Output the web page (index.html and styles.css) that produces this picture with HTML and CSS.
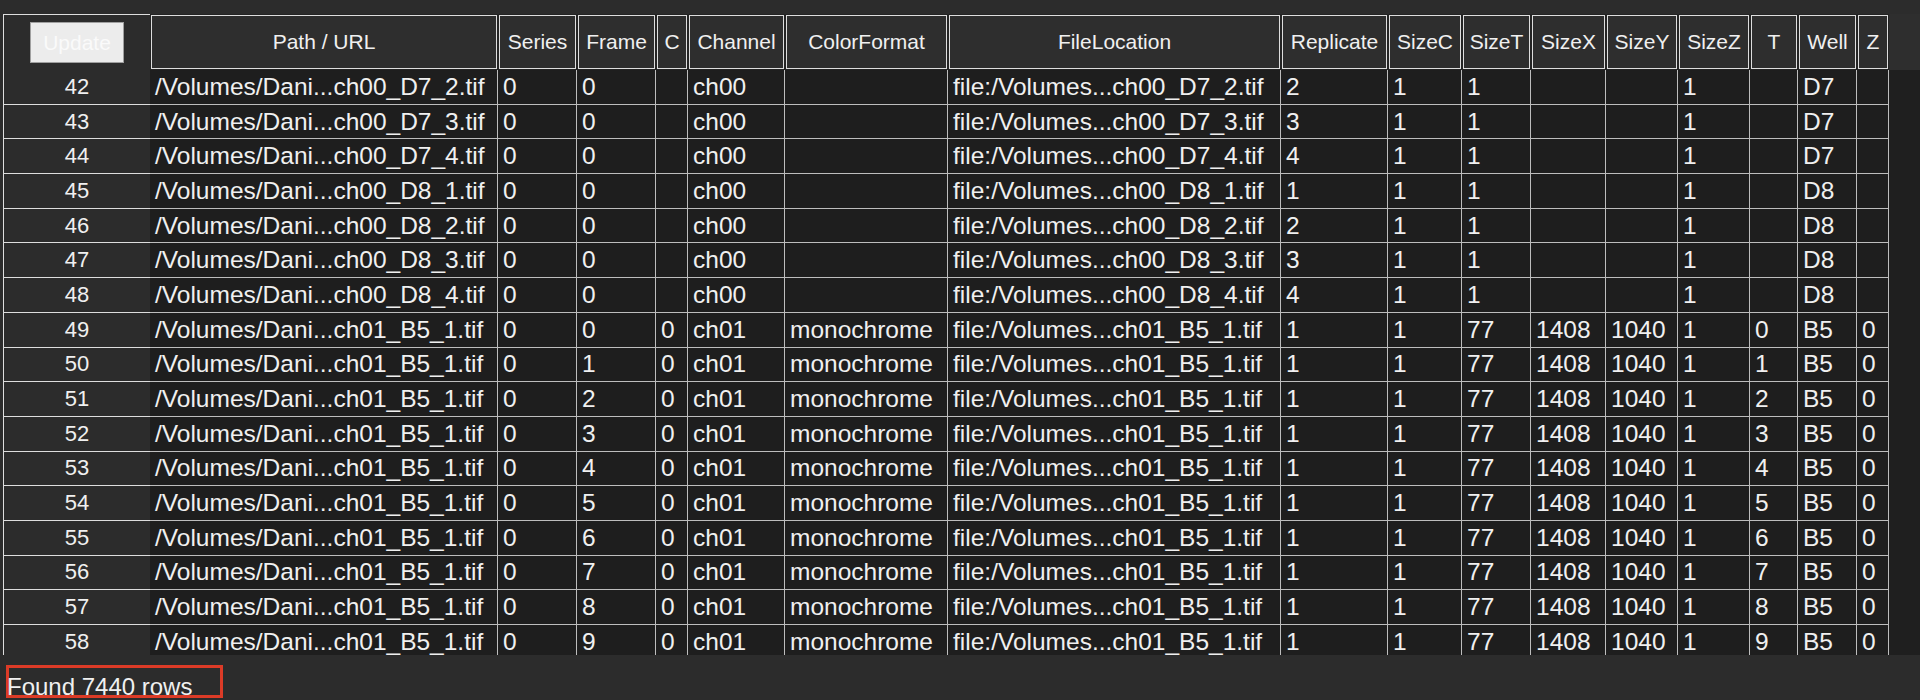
FILE: index.html
```html
<!DOCTYPE html>
<html lang="en">
<head>
    <meta charset="UTF-8">
    <meta name="viewport" content="width=device-width, initial-scale=1.0">
    <title>Image Table</title>

    <link rel="stylesheet" href="styles.css">
</head>
<body>

    <!-- Table view -->
    <div class="table-view">
        <table class="data-table">
            <colgroup>
                <col class="col-index">
                <col class="col-path">
                <col class="col-series">
                <col class="col-frame">
                <col class="col-c">
                <col class="col-channel">
                <col class="col-color">
                <col class="col-location">
                <col class="col-replicate">
                <col class="col-sizec">
                <col class="col-sizet">
                <col class="col-sizex">
                <col class="col-sizey">
                <col class="col-sizez">
                <col class="col-t">
                <col class="col-well">
                <col class="col-z">
                <col>
            </colgroup>
            <thead>
                <tr>
                    <th class="corner"><button class="update-button">Update</button></th>
                    <th>Path / URL</th>
                    <th>Series</th>
                    <th>Frame</th>
                    <th>C</th>
                    <th>Channel</th>
                    <th>ColorFormat</th>
                    <th>FileLocation</th>
                    <th>Replicate</th>
                    <th>SizeC</th>
                    <th>SizeT</th>
                    <th>SizeX</th>
                    <th>SizeY</th>
                    <th>SizeZ</th>
                    <th>T</th>
                    <th>Well</th>
                    <th>Z</th>
                    <th class="filler"></th>
                </tr>
            </thead>
            <tbody>
                <tr><th>42</th><td>/Volumes/Dani...ch00_D7_2.tif</td><td>0</td><td>0</td><td></td><td>ch00</td><td></td><td>file:/Volumes...ch00_D7_2.tif</td><td>2</td><td>1</td><td>1</td><td></td><td></td><td>1</td><td></td><td>D7</td><td></td><td class="filler"></td></tr>
                <tr><th>43</th><td>/Volumes/Dani...ch00_D7_3.tif</td><td>0</td><td>0</td><td></td><td>ch00</td><td></td><td>file:/Volumes...ch00_D7_3.tif</td><td>3</td><td>1</td><td>1</td><td></td><td></td><td>1</td><td></td><td>D7</td><td></td><td class="filler"></td></tr>
                <tr><th>44</th><td>/Volumes/Dani...ch00_D7_4.tif</td><td>0</td><td>0</td><td></td><td>ch00</td><td></td><td>file:/Volumes...ch00_D7_4.tif</td><td>4</td><td>1</td><td>1</td><td></td><td></td><td>1</td><td></td><td>D7</td><td></td><td class="filler"></td></tr>
                <tr><th>45</th><td>/Volumes/Dani...ch00_D8_1.tif</td><td>0</td><td>0</td><td></td><td>ch00</td><td></td><td>file:/Volumes...ch00_D8_1.tif</td><td>1</td><td>1</td><td>1</td><td></td><td></td><td>1</td><td></td><td>D8</td><td></td><td class="filler"></td></tr>
                <tr><th>46</th><td>/Volumes/Dani...ch00_D8_2.tif</td><td>0</td><td>0</td><td></td><td>ch00</td><td></td><td>file:/Volumes...ch00_D8_2.tif</td><td>2</td><td>1</td><td>1</td><td></td><td></td><td>1</td><td></td><td>D8</td><td></td><td class="filler"></td></tr>
                <tr><th>47</th><td>/Volumes/Dani...ch00_D8_3.tif</td><td>0</td><td>0</td><td></td><td>ch00</td><td></td><td>file:/Volumes...ch00_D8_3.tif</td><td>3</td><td>1</td><td>1</td><td></td><td></td><td>1</td><td></td><td>D8</td><td></td><td class="filler"></td></tr>
                <tr><th>48</th><td>/Volumes/Dani...ch00_D8_4.tif</td><td>0</td><td>0</td><td></td><td>ch00</td><td></td><td>file:/Volumes...ch00_D8_4.tif</td><td>4</td><td>1</td><td>1</td><td></td><td></td><td>1</td><td></td><td>D8</td><td></td><td class="filler"></td></tr>
                <tr><th>49</th><td>/Volumes/Dani...ch01_B5_1.tif</td><td>0</td><td>0</td><td>0</td><td>ch01</td><td>monochrome</td><td>file:/Volumes...ch01_B5_1.tif</td><td>1</td><td>1</td><td>77</td><td>1408</td><td>1040</td><td>1</td><td>0</td><td>B5</td><td>0</td><td class="filler"></td></tr>
                <tr><th>50</th><td>/Volumes/Dani...ch01_B5_1.tif</td><td>0</td><td>1</td><td>0</td><td>ch01</td><td>monochrome</td><td>file:/Volumes...ch01_B5_1.tif</td><td>1</td><td>1</td><td>77</td><td>1408</td><td>1040</td><td>1</td><td>1</td><td>B5</td><td>0</td><td class="filler"></td></tr>
                <tr><th>51</th><td>/Volumes/Dani...ch01_B5_1.tif</td><td>0</td><td>2</td><td>0</td><td>ch01</td><td>monochrome</td><td>file:/Volumes...ch01_B5_1.tif</td><td>1</td><td>1</td><td>77</td><td>1408</td><td>1040</td><td>1</td><td>2</td><td>B5</td><td>0</td><td class="filler"></td></tr>
                <tr><th>52</th><td>/Volumes/Dani...ch01_B5_1.tif</td><td>0</td><td>3</td><td>0</td><td>ch01</td><td>monochrome</td><td>file:/Volumes...ch01_B5_1.tif</td><td>1</td><td>1</td><td>77</td><td>1408</td><td>1040</td><td>1</td><td>3</td><td>B5</td><td>0</td><td class="filler"></td></tr>
                <tr><th>53</th><td>/Volumes/Dani...ch01_B5_1.tif</td><td>0</td><td>4</td><td>0</td><td>ch01</td><td>monochrome</td><td>file:/Volumes...ch01_B5_1.tif</td><td>1</td><td>1</td><td>77</td><td>1408</td><td>1040</td><td>1</td><td>4</td><td>B5</td><td>0</td><td class="filler"></td></tr>
                <tr><th>54</th><td>/Volumes/Dani...ch01_B5_1.tif</td><td>0</td><td>5</td><td>0</td><td>ch01</td><td>monochrome</td><td>file:/Volumes...ch01_B5_1.tif</td><td>1</td><td>1</td><td>77</td><td>1408</td><td>1040</td><td>1</td><td>5</td><td>B5</td><td>0</td><td class="filler"></td></tr>
                <tr><th>55</th><td>/Volumes/Dani...ch01_B5_1.tif</td><td>0</td><td>6</td><td>0</td><td>ch01</td><td>monochrome</td><td>file:/Volumes...ch01_B5_1.tif</td><td>1</td><td>1</td><td>77</td><td>1408</td><td>1040</td><td>1</td><td>6</td><td>B5</td><td>0</td><td class="filler"></td></tr>
                <tr><th>56</th><td>/Volumes/Dani...ch01_B5_1.tif</td><td>0</td><td>7</td><td>0</td><td>ch01</td><td>monochrome</td><td>file:/Volumes...ch01_B5_1.tif</td><td>1</td><td>1</td><td>77</td><td>1408</td><td>1040</td><td>1</td><td>7</td><td>B5</td><td>0</td><td class="filler"></td></tr>
                <tr><th>57</th><td>/Volumes/Dani...ch01_B5_1.tif</td><td>0</td><td>8</td><td>0</td><td>ch01</td><td>monochrome</td><td>file:/Volumes...ch01_B5_1.tif</td><td>1</td><td>1</td><td>77</td><td>1408</td><td>1040</td><td>1</td><td>8</td><td>B5</td><td>0</td><td class="filler"></td></tr>
                <tr><th>58</th><td>/Volumes/Dani...ch01_B5_1.tif</td><td>0</td><td>9</td><td>0</td><td>ch01</td><td>monochrome</td><td>file:/Volumes...ch01_B5_1.tif</td><td>1</td><td>1</td><td>77</td><td>1408</td><td>1040</td><td>1</td><td>9</td><td>B5</td><td>0</td><td class="filler"></td></tr>
            </tbody>
        </table>
    </div>

    <!-- Status line -->
    <div class="status-bar">
        <span class="row-count">Found 7440 rows</span>
    </div>

</body>
</html>
```

FILE: styles.css
```css
* {
    box-sizing: border-box;
}

body {
    margin: 0;
    height: 700px;
    overflow: hidden;
    background-color: #2c2c2c;
    color: #f0f0f0;
    font-family: "Liberation Sans", Arial, sans-serif;
}

/* Table View */
.table-view {
    margin-top: 14px;
    height: 641px;
    padding-left: 3px;
    overflow: hidden;
}

.data-table {
    width: 100%;
    table-layout: fixed;
    border-collapse: separate;
    border-spacing: 0;
}

.col-index { width: 147px; }
.col-path { width: 348px; }
.col-series { width: 79px; }
.col-frame { width: 79px; }
.col-c { width: 32px; }
.col-channel { width: 97px; }
.col-color { width: 163px; }
.col-location { width: 333px; }
.col-replicate { width: 107px; }
.col-sizec { width: 74px; }
.col-sizet { width: 69px; }
.col-sizex { width: 75px; }
.col-sizey { width: 72px; }
.col-sizez { width: 72px; }
.col-t { width: 48px; }
.col-well { width: 59px; }
.col-z { width: 32px; }

/* Header */
.data-table thead th {
    height: 56px;
    padding: 0;
    background: #2e2e2e;
    border: 1px solid #242424;
    box-shadow: inset 0 0 0 1px #dedede;
    font-size: 21px;
    font-weight: normal;
    text-align: center;
    white-space: nowrap;
    overflow: hidden;
}

.data-table thead th.corner {
    border: none;
    border-top: 1px solid #dedede;
    border-left: 1px solid #dedede;
    box-shadow: none;
    background: #2c2c2c;
}

.data-table thead th.filler {
    border: none;
    box-shadow: none;
}

.update-button {
    width: 94px;
    height: 41px;
    padding: 0;
    background: #ececec;
    border: 1px solid #a0a0a0;
    color: #fafafa;
    font-family: "Liberation Sans", Arial, sans-serif;
    font-size: 21px;
}

/* Row numbers */
.data-table tbody th {
    height: 34.7px;
    padding: 0;
    background: #2c2c2c;
    border-left: 1px solid #dedede;
    border-bottom: 1px solid #dedede;
    font-size: 22px;
    font-weight: normal;
    text-align: center;
}

/* Cells */
.data-table td {
    height: 34.7px;
    padding: 0 3px 0 5px;
    background: #1e1e1e;
    border-right: 1px solid #bdbdbd;
    border-bottom: 1px solid #bdbdbd;
    font-size: 24.5px;
    white-space: nowrap;
    overflow: hidden;
}

.data-table td.filler {
    border: none;
    background: #1f1f1f;
}

/* Status */
.status-bar {
    height: 45px;
    padding: 10px 0 0 6px;
}

.row-count {
    display: block;
    width: 217px;
    height: 33px;
    padding-top: 5px;
    border: 3px solid #dc3b27;
    font-size: 24px;
    line-height: 28px;
    text-indent: -2px;
    white-space: nowrap;
}
```
